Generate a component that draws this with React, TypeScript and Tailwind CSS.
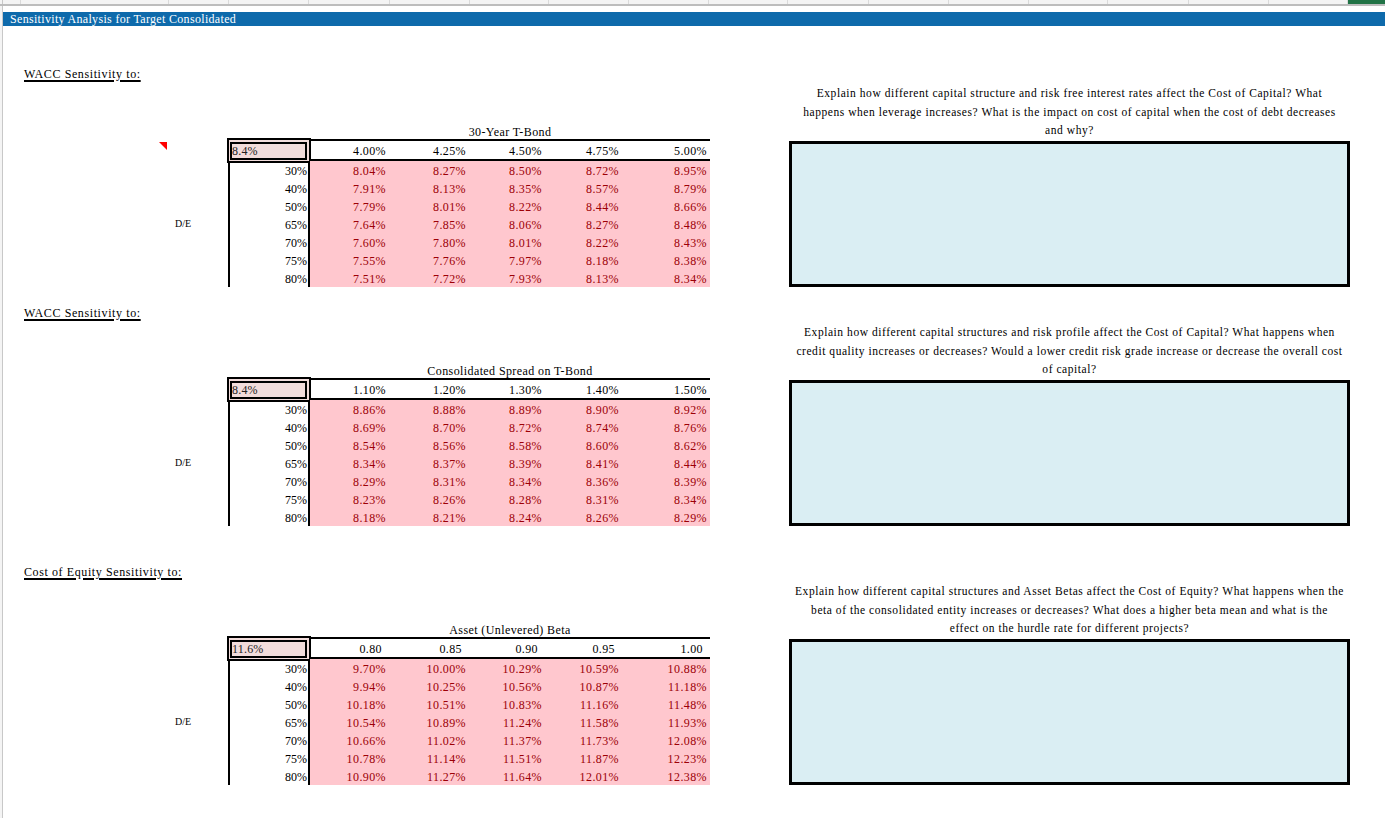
import React from 'react'

type Table = {
  title: string
  label: string
  corner: string
  cols: string[]
  rows: { de: string; vals: string[] }[]
  question: string[]
  flag?: boolean
  colPad?: number
}

const PAD = ['pr-[4px]', 'pr-[4px]', 'pr-[8px]', 'pr-[11px]', 'pr-[3px]']
const HEAD_PAD_NUM = ['pr-[8px]', 'pr-[8px]', 'pr-[12px]', 'pr-[15px]', 'pr-[7px]']
const DE = ['30%', '40%', '50%', '65%', '70%', '75%', '80%']

const sections: Table[] = [
  {
    title: 'WACC Sensitivity to:',
    label: '30-Year T-Bond',
    corner: '8.4%',
    cols: ['4.00%', '4.25%', '4.50%', '4.75%', '5.00%'],
    flag: true,
    rows: [
      ['8.04%', '8.27%', '8.50%', '8.72%', '8.95%'],
      ['7.91%', '8.13%', '8.35%', '8.57%', '8.79%'],
      ['7.79%', '8.01%', '8.22%', '8.44%', '8.66%'],
      ['7.64%', '7.85%', '8.06%', '8.27%', '8.48%'],
      ['7.60%', '7.80%', '8.01%', '8.22%', '8.43%'],
      ['7.55%', '7.76%', '7.97%', '8.18%', '8.38%'],
      ['7.51%', '7.72%', '7.93%', '8.13%', '8.34%'],
    ].map((vals, i) => ({ de: DE[i], vals })),
    question: [
      'Explain how different capital structure and risk free interest rates affect the Cost of Capital? What',
      'happens when leverage increases? What is the impact on cost of capital when the cost of debt decreases',
      'and why?',
    ],
  },
  {
    title: 'WACC Sensitivity to:',
    label: 'Consolidated Spread on T-Bond',
    corner: '8.4%',
    cols: ['1.10%', '1.20%', '1.30%', '1.40%', '1.50%'],
    rows: [
      ['8.86%', '8.88%', '8.89%', '8.90%', '8.92%'],
      ['8.69%', '8.70%', '8.72%', '8.74%', '8.76%'],
      ['8.54%', '8.56%', '8.58%', '8.60%', '8.62%'],
      ['8.34%', '8.37%', '8.39%', '8.41%', '8.44%'],
      ['8.29%', '8.31%', '8.34%', '8.36%', '8.39%'],
      ['8.23%', '8.26%', '8.28%', '8.31%', '8.34%'],
      ['8.18%', '8.21%', '8.24%', '8.26%', '8.29%'],
    ].map((vals, i) => ({ de: DE[i], vals })),
    question: [
      'Explain how different capital structures and risk profile affect the Cost of Capital? What happens when',
      'credit quality increases or decreases? Would a lower credit risk grade increase or decrease the overall cost',
      'of capital?',
    ],
  },
  {
    title: 'Cost of Equity Sensitivity to:',
    label: 'Asset (Unlevered) Beta',
    corner: '11.6%',
    cols: ['0.80', '0.85', '0.90', '0.95', '1.00'],
    colPad: 1,
    rows: [
      ['9.70%', '10.00%', '10.29%', '10.59%', '10.88%'],
      ['9.94%', '10.25%', '10.56%', '10.87%', '11.18%'],
      ['10.18%', '10.51%', '10.83%', '11.16%', '11.48%'],
      ['10.54%', '10.89%', '11.24%', '11.58%', '11.93%'],
      ['10.66%', '11.02%', '11.37%', '11.73%', '12.08%'],
      ['10.78%', '11.14%', '11.51%', '11.87%', '12.23%'],
      ['10.90%', '11.27%', '11.64%', '12.01%', '12.38%'],
    ].map((vals, i) => ({ de: DE[i], vals })),
    question: [
      'Explain how different capital structures and Asset Betas affect the Cost of Equity? What happens when the',
      'beta of the consolidated entity increases or decreases? What does a higher beta mean and what is the',
      'effect on the hurdle rate for different projects?',
    ],
  },
]

// column header strip widths (x positions of the sheet's grid)
const gridCols = [18, 148, 60, 80, 81, 80, 79, 80, 80, 79, 81, 80, 80, 79, 81, 80, 79]

function Section({ s, className }: { s: Table; className: string }) {
  const headPad = s.colPad ? HEAD_PAD_NUM : PAD
  return (
    <div className={`flex ${className}`}>
      {/* left: title + data table */}
      <div className="w-[786px] shrink-0 tracking-[0.4px]">
        <div className="h-[14px] pl-[21px] text-[12px] leading-[14px] tracking-[0.6px]">
          <span className="underline decoration-[1.5px] underline-offset-[2px]">{s.title}</span>
        </div>

        <div className="mt-[44px] flex h-[14px] text-[12px] leading-[14px]">
          <div className="w-[307px] shrink-0" />
          <div className="w-[400px] text-center">{s.label}</div>
        </div>

        {/* header row */}
        <div className="flex h-[22px] text-[12px]">
          <div className="w-[224px] shrink-0 pl-[156px] pt-[3px]">
            {s.flag && (
              <svg width="8" height="8" viewBox="0 0 8 8">
                <polygon points="0,0 8,0 8,8" fill="#ff0000" />
              </svg>
            )}
          </div>
          <div className="-mt-[1px] h-[25px] w-[84px] shrink-0 border-2 border-black bg-[#f2dcdb] pb-[1px] pl-[1px] pr-[2px] pt-[2px]">
            <div className="h-full border-2 border-black bg-[#f2dcdb] text-[12px] leading-[15px] tracking-[0.2px] text-[#222]">
              {s.corner}
            </div>
          </div>
          <div className="flex h-[22px] border-y-2 border-black bg-white">
            {s.cols.map((c, i) => (
              <div
                key={c}
                className={`${i === 0 ? 'w-[79px]' : 'w-[80px]'} ${headPad[i]} text-right leading-[20px]`}
              >
                {c}
              </div>
            ))}
          </div>
        </div>

        {/* data rows */}
        {s.rows.map((r, ri) => (
          <div key={r.de} className="flex h-[18px] text-[12px] leading-[20px]">
            <div className="w-[225px] shrink-0 pl-[172px] text-[10px] leading-[18px] tracking-normal">
              {ri === 3 ? 'D/E' : ''}
            </div>
            <div className="w-[82px] shrink-0 border-x-2 border-black pr-[1px] text-right tracking-normal">
              {r.de}
            </div>
            <div className="flex bg-[#ffc7ce] text-[#9c0006]">
              {r.vals.map((v, i) => (
                <div key={i} className={`w-[80px] ${PAD[i]} text-right`}>
                  {v}
                </div>
              ))}
            </div>
          </div>
        ))}
      </div>

      {/* right: question + answer box */}
      <div className="w-[561px] shrink-0">
        <div className="mt-[17px] text-center text-[11.5px] leading-[18.5px] tracking-[0.55px] whitespace-nowrap">
          {s.question.map((q) => (
            <div key={q}>{q}</div>
          ))}
        </div>
        <div className="mt-[1.5px] h-[146px] border-[3px] border-black bg-[#daeef3]" />
      </div>
    </div>
  )
}

export default function App() {
  return (
    <div className="h-[818px] w-[1385px] overflow-hidden bg-white font-['Liberation_Serif',serif] text-black">
      {/* column header strip */}
      <div className="flex h-[6px] border-b-2 border-[#bdbdbd] bg-[#f4f4f4]">
        <div className="w-[3px] shrink-0 border-r border-[#c8c8c8]" />
        {gridCols.map((w, i) => (
          <div key={i} className="shrink-0 border-r border-[#dadada]" style={{ width: w }} />
        ))}
        <div className="flex-1 bg-[#217346]" />
      </div>

      <div className="flex h-[812px]">
        {/* row header gutter */}
        <div className="w-[3px] shrink-0 border-r border-[#c8c8c8] bg-[#f4f4f4]" />

        <div className="flex-1">
          <div className="mt-[6px] h-[14px] bg-[#0e6aab] pl-[7px] text-[12px] leading-[15px] tracking-[0.32px] text-white">
            Sensitivity Analysis for Target Consolidated
          </div>

          <Section s={sections[0]} className="mt-[41px]" />
          <Section s={sections[1]} className="mt-[19px]" />
          <Section s={sections[2]} className="mt-[39px]" />
        </div>
      </div>
    </div>
  )
}
